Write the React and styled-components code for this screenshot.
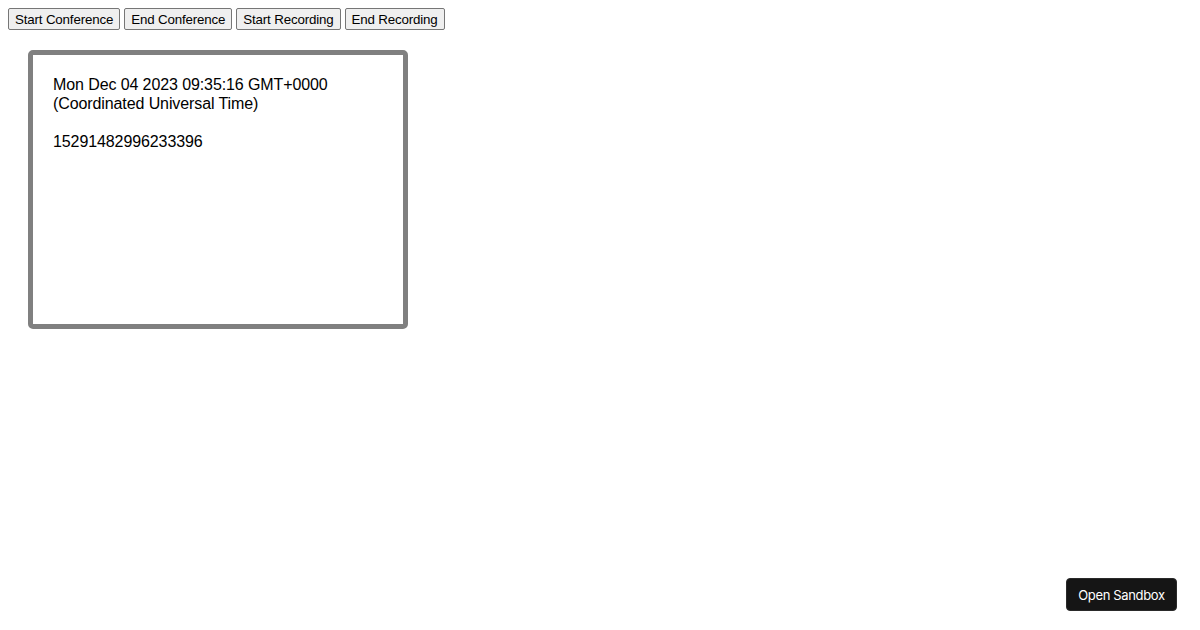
import React from 'react';
import styled, { createGlobalStyle } from 'styled-components';

const GlobalStyle = createGlobalStyle`
  body {
    margin: 8px;
    background: #ffffff;
    font-family: "Liberation Sans", Arial, sans-serif;
    color: #000000;
  }
`;

const Toolbar = styled.div`
  display: flex;
  gap: 4px;
`;

const ControlButton = styled.button`
  font-family: "Liberation Sans", Arial, sans-serif;
  font-size: 13.333px;
  letter-spacing: -0.16px;
  height: 22px;
  padding: 1px 6px;
  background: #efefef;
  color: #000000;
  border: 1px solid #767676;
  border-radius: 2px;
  cursor: pointer;
`;

const VideoBox = styled.div`
  box-sizing: border-box;
  width: 380px;
  height: 279px;
  margin: 20px;
  padding: 20px;
  border: 5px solid #808080;
  border-radius: 5px;
  font-size: 16px;
  line-height: 19px;
  letter-spacing: -0.1px;
`;

const Line = styled.div`
  margin-bottom: ${(p) => (p.$gap ? '19px' : '0')};
`;

const SandboxButton = styled.button`
  position: fixed;
  right: 23px;
  bottom: 19px;
  width: 111px;
  height: 33px;
  background: #151515;
  color: #ffffff;
  border: 1px solid #2a2a2a;
  border-radius: 4px;
  font-family: Inter, "Liberation Sans", sans-serif;
  font-size: 13px;
  letter-spacing: -0.35px;
  cursor: pointer;
`;

const App = () => {
  const buttons = ['Start Conference', 'End Conference', 'Start Recording', 'End Recording'];
  return (
    <>
      <GlobalStyle />
      <Toolbar>
        {buttons.map((label) => (
          <ControlButton key={label}>{label}</ControlButton>
        ))}
      </Toolbar>
      <VideoBox>
        <Line $gap>Mon Dec 04 2023 09:35:16 GMT+0000 (Coordinated Universal Time)</Line>
        <Line>15291482996233396</Line>
      </VideoBox>
      <SandboxButton>Open Sandbox</SandboxButton>
    </>
  );
};

export default App;
